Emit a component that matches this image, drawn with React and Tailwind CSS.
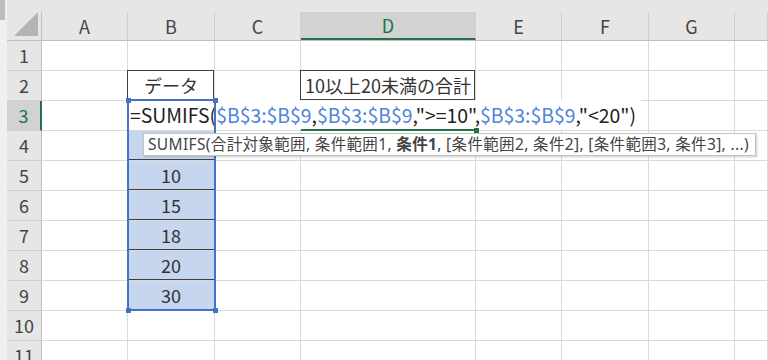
import React from 'react';

const cols = [
  { key: 'A', w: 'w-[86px]' },
  { key: 'B', w: 'w-[87px]' },
  { key: 'C', w: 'w-[86px]' },
  { key: 'D', w: 'w-[175px]' },
  { key: 'E', w: 'w-[86px]' },
  { key: 'F', w: 'w-[87px]' },
  { key: 'G', w: 'w-[86px]' },
  { key: '', w: 'flex-1' },
];

const values = { 5: '10', 6: '15', 7: '18', 8: '20', 9: '30' };

const Cell = ({ col, row }) => {
  const inB = col === 'B' && row >= 4 && row <= 9;
  let content = null;
  if (col === 'B' && row === 2) content = 'データ';
  if (col === 'D' && row === 2) content = '10以上20未満の合計';
  if (col === 'B' && values[row]) content = values[row];

  return (
    <div
      className={`relative shrink-0 h-full border-r border-b border-[#dadada] flex items-center justify-center text-[18px] text-[#333] ${
        cols.find((c) => c.key === col).w
      } ${inB ? 'bg-[#c6d6ef]' : ''}`}
    >
      {(col === 'B' || col === 'D') && row === 2 && (
        <div className="absolute -left-px -top-px right-0 bottom-0 border border-[#3f3f3f]" />
      )}
      {inB && <div className="absolute -left-px right-0 bottom-0 h-px bg-[#3f3f3f]" />}
      <span className="relative">{content}</span>
    </div>
  );
};

const Blue = ({ children }) => <span className="text-[#4f84dc]">{children}</span>;

export default function App() {
  const rows = [1, 2, 3, 4, 5, 6, 7, 8, 9, 10, 11];

  return (
    <div
      className="relative w-[768px] h-[360px] overflow-hidden bg-white flex"
      style={{ fontFamily: '"Noto Sans CJK JP", "Noto Sans", sans-serif' }}
    >
      {/* left strip */}
      <div className="w-[7px] shrink-0 bg-[#f0f0f0]">
        <div className="w-[5px] h-[20px] bg-[#bdbdbd]" />
      </div>

      <div className="flex-1 flex flex-col">
        {/* top strip */}
        <div className="h-[12px] shrink-0 bg-[#e6e6e6]" />

        {/* column header */}
        <div className="h-[29px] shrink-0 flex bg-[#e6e6e6] border-b border-[#bfbfbf]">
          <div className="w-[35px] shrink-0 h-full border-r border-[#bfbfbf] relative">
            <div className="absolute right-[3px] bottom-[4px] w-0 h-0 border-l-[24px] border-l-transparent border-b-[24px] border-b-[#b4b4b4]" />
          </div>
          {cols.map((c) => (
            <div
              key={c.key}
              className={`${c.w} shrink-0 h-full border-r border-[#d0d0d0] flex items-center justify-center text-[18px] ${
                c.key === 'D' ? 'bg-[#d2d2d2] text-[#217346] border-b-2 border-b-[#217346]' : 'text-[#444]'
              }`}
            >
              {c.key}
            </div>
          ))}
        </div>

        {rows.map((r) => (
          <div key={r} className="h-[30px] shrink-0 flex">
            <div
              className={`w-[35px] shrink-0 h-full border-b border-[#d0d0d0] flex items-center justify-center text-[18px] ${
                r === 3
                  ? 'bg-[#d2d2d2] text-[#217346] border-r-2 border-r-[#217346]'
                  : 'bg-[#e6e6e6] text-[#444] border-r border-r-[#bfbfbf]'
              }`}
            >
              {r}
            </div>
            {cols.map((c) => (
              <Cell key={c.key} col={c.key} row={r} />
            ))}
          </div>
        ))}
      </div>

      {/* editing text for D3 */}
      <div className="absolute left-[129px] top-[100px] h-[29px] w-[512px] bg-white flex items-center pl-[1px] text-[19.4px] text-[#222] whitespace-nowrap leading-none">
        =SUMIFS(<Blue>$B$3:$B$9</Blue>,<Blue>$B$3:$B$9</Blue>,"&gt;=10",<Blue>$B$3:$B$9</Blue>,"&lt;20")
      </div>

      {/* active cell bottom line */}
      <div className="absolute left-[301px] top-[129px] w-[175px] h-[2px] bg-[#217346]" />
      <div className="absolute left-[474px] top-[128px] w-[5px] h-[5px] bg-[#217346]" />

      {/* range border B3:B9 */}
      <div className="absolute left-[127px] top-[99px] w-[89px] h-[212px] border-2 border-[#4472c4]" />
      <div className="absolute left-[126px] top-[98px] w-[5px] h-[5px] bg-[#4472c4]" />
      <div className="absolute left-[213px] top-[98px] w-[5px] h-[5px] bg-[#4472c4]" />
      <div className="absolute left-[126px] top-[308px] w-[5px] h-[5px] bg-[#4472c4]" />
      <div className="absolute left-[213px] top-[308px] w-[5px] h-[5px] bg-[#4472c4]" />

      {/* function tooltip */}
      <div
        className="absolute left-[143px] top-[133px] h-[23px] w-[613px] bg-white border border-[#c4c4c4] shadow-[1px_1px_2px_rgba(0,0,0,0.2)] flex items-center pl-[4px] text-[15.5px] tracking-[0.35px] text-[#444] whitespace-nowrap leading-none"
        style={{ fontFamily: '"Noto Sans", "Noto Sans CJK JP", sans-serif' }}
      >
        SUMIFS(合計対象範囲, 条件範囲1,&nbsp;<b className="font-bold">条件1</b>, [条件範囲2, 条件2], [条件範囲3, 条件3], ...)
      </div>
    </div>
  );
}
